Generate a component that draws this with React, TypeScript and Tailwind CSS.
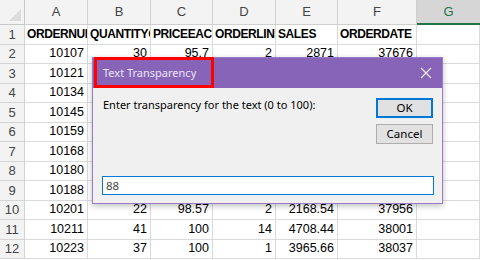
import React from "react";

const cols = ["A", "B", "C", "D", "E", "F", "G"];

const headerRow = ["ORDERNUMBER", "QUANTITYORDERED", "PRICEEACH", "ORDERLINENUMBER", "SALES", "ORDERDATE", ""];

const rows: string[][] = [
  ["10107", "30", "95.7", "2", "2871", "37676", ""],
  ["10121", "34", "81.35", "5", "2765.9", "37701", ""],
  ["10134", "41", "94.74", "2", "3884.34", "37802", ""],
  ["10145", "45", "83.26", "6", "3746.7", "37858", ""],
  ["10159", "49", "100", "14", "5205.27", "37904", ""],
  ["10168", "36", "96.66", "1", "3479.76", "37921", ""],
  ["10180", "29", "86.13", "9", "2497.77", "37932", ""],
  ["10188", "48", "100", "1", "5512.32", "37942", ""],
  ["10201", "22", "98.57", "2", "2168.54", "37956", ""],
  ["10211", "41", "100", "14", "4708.44", "38001", ""],
  ["10223", "37", "100", "1", "3965.66", "38037", ""],
];

function Cell({ children, bold }: { children?: React.ReactNode; bold?: boolean }) {
  return (
    <div
      className={`h-[19.5px] border-r border-b border-[#dadada] bg-white overflow-hidden whitespace-nowrap flex items-center text-black ${
        bold ? "font-bold text-[12px] tracking-[-0.4px] justify-start pl-[2px]" : "text-[12.5px] justify-end pr-[3px]"
      }`}
    >
      {children}
    </div>
  );
}

function RowHeader({ n }: { n: number }) {
  return (
    <div className="h-[19.5px] bg-[#f3f3f3] border-r border-b border-[#d4d4d4] flex items-center justify-center text-[13px] text-[#444]">
      {n}
    </div>
  );
}

export default function App() {
  return (
    <div
      className="relative w-[480px] h-[260px] overflow-hidden bg-white"
      style={{ fontFamily: '"Liberation Sans", Arial, sans-serif' }}
    >
      {/* Sheet grid */}
      <div className="grid grid-cols-[25px_63px_63px_62px_63px_62px_79px_63px]">
        {/* Column headers */}
        <div className="relative h-[25px] bg-[#f3f3f3] border-r border-b border-[#c8c8c8]">
          <div className="absolute right-[3px] bottom-[3px] w-0 h-0 border-l-[12px] border-l-transparent border-b-[12px] border-b-[#dcdcdc]" />
        </div>
        {cols.map((c) =>
          c === "G" ? (
            <div
              key={c}
              className="h-[25px] bg-[#d6d6d6] border-b-2 border-[#217346] flex items-center justify-center text-[13px] text-[#217346]"
            >
              {c}
            </div>
          ) : (
            <div
              key={c}
              className="h-[25px] bg-[#f3f3f3] border-r border-b border-[#d0d0d0] flex items-center justify-center text-[13px] text-[#444]"
            >
              {c}
            </div>
          )
        )}

        {/* Row 1 - field names */}
        <RowHeader n={1} />
        {headerRow.map((h, i) => (
          <Cell key={i} bold>
            {h}
          </Cell>
        ))}

        {rows.map((r, ri) => (
          <React.Fragment key={ri}>
            <RowHeader n={ri + 2} />
            {r.map((v, ci) => (
              <Cell key={ci}>{v}</Cell>
            ))}
          </React.Fragment>
        ))}
      </div>

      {/* Dialog */}
      <div
        className="absolute left-[92px] top-[57px] w-[351px] h-[147px] bg-[#f0f0f0] border border-[#9a7cc6] shadow-[0_2px_6px_rgba(0,0,0,0.25)] flex flex-col"
        style={{ fontFamily: '"Noto Sans", "Open Sans", sans-serif' }}
      >
        <div className="h-[30px] bg-[#8764b8] flex items-center justify-between pl-[10px] pr-[9px]">
          <span className="text-[11px] text-[#ece4f7]">Text Transparency</span>
          <svg width="12" height="12" viewBox="0 0 12 12" className="mr-[1px]">
            <path d="M1 1 L11 11 M11 1 L1 11" stroke="#f2ecfa" strokeWidth="1.2" fill="none" />
          </svg>
        </div>
        <div className="flex-1 flex flex-col pl-[9px] pr-[8px] pt-[10px]">
          <div className="flex justify-between items-start">
            <span className="text-[11px] leading-[14px] text-black pl-[1px]">
              Enter transparency for the text (0 to 100):
            </span>
            <div className="flex flex-col gap-[6px] mr-[1px]">
              <button className="w-[57px] h-[20px] bg-[#e1e1e1] border-2 border-[#0078d7] text-[11.5px] text-black flex items-center justify-center">
                OK
              </button>
              <button className="w-[57px] h-[20px] bg-[#e1e1e1] border border-[#adadad] text-[11.5px] text-black flex items-center justify-center">
                Cancel
              </button>
            </div>
          </div>
          <div className="mt-[32px] h-[19px] bg-white border border-[#0078d7] flex items-center pl-[3px] text-[11.5px] text-[#444]">
            88
          </div>
        </div>
      </div>

      {/* Red highlight round the title */}
      <div className="absolute left-[94px] top-[57px] w-[120px] h-[31px] border-[3px] border-[#ff0000]" />
    </div>
  );
}
